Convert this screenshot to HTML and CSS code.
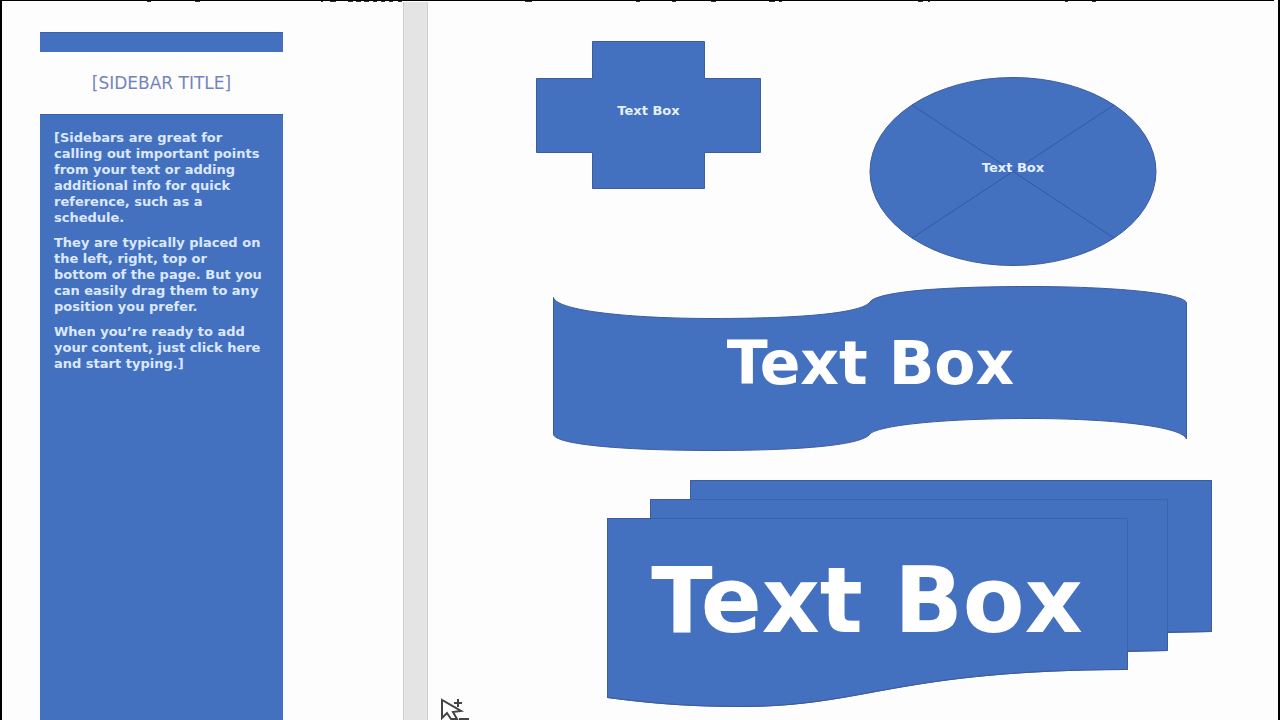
FILE: index.html
```html
<!doctype html>
<html lang="en">
  <head>
    <meta charset="utf-8">
    <title>Text Box Shapes</title>
    <link rel="stylesheet" href="styles.css">
  </head>
  <body>
    <div class="desktop">
      <div class="page-left">
        <aside class="sidebar">
          <div class="bar"></div>
          <h2 class="sidebar-title">[SIDEBAR TITLE]</h2>
          <div class="sidebar-text">
            <p>[Sidebars are great for<br>calling out important points<br>from your text or adding<br>additional info for quick<br>reference, such as a<br>schedule.</p>
            <p>They are typically placed on<br>the left, right, top or<br>bottom of the page. But you<br>can easily drag them to any<br>position you prefer.</p>
            <p>When you’re ready to add<br>your content, just click here<br>and start typing.]</p>
          </div>
        </aside>
      </div>
      <div class="gutter"></div>
      <main class="canvas">
        <div class="shape cross">
          <svg width="225" height="149" viewBox="0 0 225 149">
            <path d="M56.5.5h112v37h56v74h-56v36h-112v-36h-56v-74h56z"/>
          </svg>
          <span class="label small">Text Box</span>
        </div>
        <div class="shape ellipse">
          <svg width="288" height="190" viewBox="0 0 288 190">
            <ellipse cx="144" cy="94.5" rx="143" ry="94"/>
            <path class="faint" d="M43 28L245 161M245 28L43 161"/>
          </svg>
          <span class="label small">Text Box</span>
        </div>
        <div class="shape wave">
          <svg width="635" height="167" viewBox="0 0 635 167">
            <path d="M.5 11.5C4 25 78 32.500 160 32.500C250 32.500 309 27 317 16C324 6 385 .5 476 .5C560 .5 629 7 633.500 16.500V153C629 140 555 132.500 476 132.500C385 132.500 324 140 317 148C309 159 250 164.500 160 164.500C75 164.500 3 159 .5 148.500z"/>
          </svg>
          <span class="label medium">Text Box</span>
        </div>
        <div class="shape stack">
          <svg width="606" height="228" viewBox="0 0 606 228">
            <path d="M83.500.5h521v151l-60 1h-461z"/>
            <path class="seam" d="M43.500 19.500h517v151l-60 1h-457z"/>
            <path class="seam" d="M.5 38.500h520v151C290 190 260 226 136 226.500C80 226.500 42 223 .5 217.500z"/>
            <path class="edge" d="M83.500 19.500v-19h521v151l-44 1M43.500 38.500v-19h40M560.500 152v18.500l-40 1M43.500 38.500H.5v179C42 223 80 226.500 136 226.500C260 226 290 190 520.500 189.500v-18"/>
          </svg>
          <span class="label large">Text Box</span>
        </div>
        <svg class="cursor" width="32" height="22" viewBox="0 0 32 22">
          <path class="arrow" d="M2 2v18l5-5 4 6h6l-4-7 8-1z"/>
          <path class="mark" d="M14 5h8M18 1v8"/>
          <path class="mark" d="M19 21h10"/>
        </svg>
      </main>
      <!-- bottoms of the text line that is scrolled out above -->
      <svg class="cut-text" width="1272" height="2">
        <path class="line" d="M0 .5h1272"/>
        <path class="tails" d="M145 1.500h4M193 1.500h5M319 1.500h2M328 1.500h6M346 1.500h5M354 1.500h5M362 1.500h5M371 1.500h4M379 1.500h4M387 1.500h4M396 1.500h4M523 1.500h7M634 1.500h4M670 1.500h4M709 1.500h5M767 1.500h6M777 1.500h3M916 1.500h5M926 1.500h2M1063 1.500h3M1090 1.500h4"/>
      </svg>
    </div>
  </body>
</html>
```
FILE: styles.css
```css
* {
  box-sizing: border-box;
}
body {
  margin: 0;
  background-color: #fdfdfd;
  font-family: "DejaVu Sans", Verdana, sans-serif;
}
.desktop {
  position: relative;
  display: flex;
  min-height: 100vh;
  overflow: hidden;
  border-left: 2px solid #000;
  border-right: 2px solid #000;
}

/* left page */
.page-left {
  display: flex;
  flex: none;
  padding: 32px 120px 0 38px;
}
.sidebar {
  display: flex;
  flex-direction: column;
  width: 243px;
}
.bar {
  height: 20px;
  background-color: #4470c0;
  border-top: 1px solid #3b60a8;
}
.sidebar-title {
  margin: 0;
  color: #7484bb;
  font-size: 17px;
  font-weight: normal;
  line-height: 62px;
  text-align: center;
}
.sidebar-text {
  flex: 1;
  padding: 15px 0 0 14px;
  background-color: #4470c0;
  border-top: 1px solid #3b60a8;
  color: #dbe8ff;
  font-size: 13px;
  font-weight: bold;
  line-height: 16px;
  white-space: nowrap;
}
.sidebar-text p {
  margin: 0 0 9px;
}
.gutter {
  flex: none;
  width: 25px;
  margin-top: 2px;
  background-color: #e4e4e4;
  border-left: 1px solid #cfcfcf;
  border-right: 1px solid #cfcfcf;
}

/* drawing canvas, shapes are placed freely */
.canvas {
  position: relative;
  flex: 1;
}
.shape {
  position: absolute;
  display: grid;
}
.shape svg,
.label {
  grid-area: 1 / 1;
}
.shape svg {
  display: block;
  fill: #4470c0;
  stroke: #3d5c9c;
}
.shape svg .faint {
  stroke: #315aa4;
}
.shape svg .seam {
  stroke: #3a64b0;
}
.shape svg .edge {
  fill: none;
}
.cross {
  left: 108px;
  top: 41px;
}
.ellipse {
  left: 441px;
  top: 77px;
}
.wave {
  left: 125px;
  top: 286px;
}
.stack {
  left: 179px;
  top: 480px;
}
.label {
  z-index: 1;
  place-self: center;
  color: #fff;
  font-weight: bold;
  line-height: 1;
  white-space: nowrap;
}
.small {
  padding-bottom: 10px;
  color: #e4efff;
  font-size: 13px;
}
.medium {
  padding-bottom: 14px;
  font-size: 60px;
}
.large {
  padding: 14px 86px 0 0;
  font-size: 90px;
}
.cursor {
  position: absolute;
  left: 12px;
  top: 698px;
}
.arrow {
  fill: #fff;
  stroke: #444;
  stroke-width: 2;
}
.mark {
  fill: none;
  stroke: #444;
  stroke-width: 2;
}
.cut-text {
  position: absolute;
  left: 0;
  top: 0;
}
.line {
  stroke: #000;
}
.tails {
  stroke: #333;
}
```
